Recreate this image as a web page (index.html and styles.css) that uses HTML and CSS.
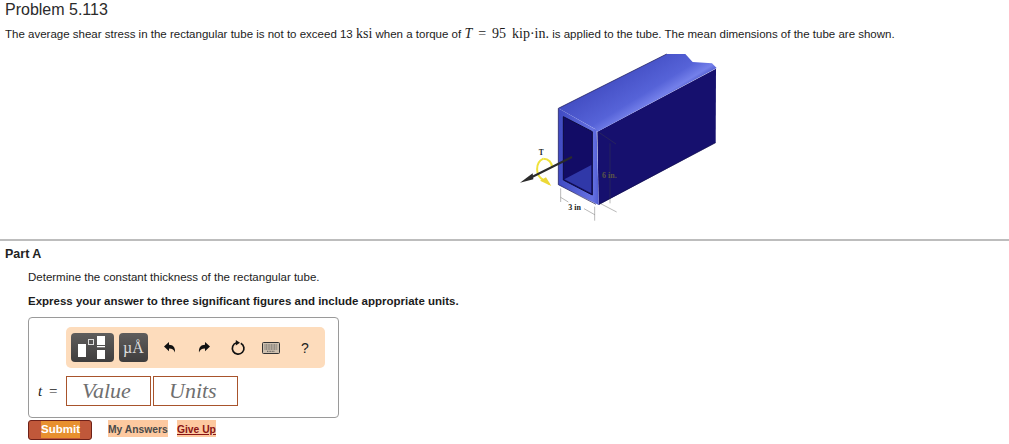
FILE: index.html
```html
<!DOCTYPE html>
<html lang="en">
<head>
<meta charset="utf-8">
<title>Problem 5.113</title>
<link rel="stylesheet" href="styles.css">
</head>
<body>
<h1 class="title">Problem 5.113</h1>
<p class="statement">The average shear stress in the rectangular tube is not to exceed 13 <span class="math">ksi</span> when a torque of <span class="math math-eq"><i>T</i> = 95 kip·in.</span> is applied to the tube. The mean dimensions of the tube are shown.</p>
<div class="figure">
<svg class="tube" viewBox="0 0 720 570" width="240" height="190" role="img" aria-label="Rectangular tube">
<defs>
<linearGradient id="top" gradientUnits="userSpaceOnUse" x1="340" y1="110" x2="420" y2="240"><stop offset="0" stop-color="#444fc4"/><stop offset="0.6" stop-color="#5663d8"/><stop offset="0.82" stop-color="#7480ea"/><stop offset="1" stop-color="#3f49bf"/></linearGradient>
<linearGradient id="front" x1="0" y1="0" x2="1" y2="0"><stop offset="0" stop-color="#3f4ac2"/><stop offset="0.85" stop-color="#6672e2"/><stop offset="1" stop-color="#4f5bd2"/></linearGradient>
</defs>
<path class="side" d="M292 275 L648 86 L647 308 L296 495 Z"/>
<path d="M175 205 L500 42 L556 42 L578 66 L636 70 L650 84 L292 275 L284 266 Z" fill="url(#top)"/>
<path d="M175 205 L290 270 L296 495 L175 434 Z" fill="url(#front)"/>
<path class="edge" d="M175 205 L500 42 M175 205 L175 434 L288 493 M296 493 L647 308"/>
<path class="hole" d="M190 230 L277 275 L277 465 L190 420 Z"/>
<path class="floor" d="M193 418 L274 375 L274 460 Z"/>
<path class="holeline" d="M190 230 L277 275 L277 465 L190 420 Z"/>
<path class="dim" d="M298 278 L348 312 M330 310 L330 490 M300 490 L350 516 M182 445 L182 486 M284 500 L284 542 M182 472 L205 486 M252 506 L284 524"/>
<path class="rot" d="M130 356 C104 368 106 408 130 420 C140 426 148 428 146 434"/>
<path class="rot" d="M130 356 C146 356 156 368 156 382"/>
<path class="rotHead" d="M120 422 L154 438 L138 412 Z"/>
<path class="shaft" d="M216 351 L90 414"/>
<path class="head" d="M60 428 L98 400 L100 418 Z"/>
<text class="lab labT" x="116" y="345">T</text>
<text class="lab lab6" x="306" y="413">6 in.</text>
<text class="lab" x="205" y="509">3 in</text>
</svg>
</div>
<hr class="rule">
<h2 class="part">Part A</h2>
<div class="body">
<p class="question">Determine the constant thickness of the rectangular tube.</p>
<p class="instruction">Express your answer to three significant figures and include appropriate units.</p>
<div class="answer">
<div class="toolbar">
<div class="tool tool-wide">
<svg viewBox="0 0 43 29" width="43" height="29"><rect class="w" x="7" y="11" width="8" height="13"/><rect class="o" x="17.500" y="6.500" width="5" height="5"/><rect class="w" x="26" y="3" width="8" height="9"/><rect class="w" x="26" y="13" width="8" height="1.300"/><rect class="w" x="26" y="17" width="8" height="9"/></svg>
</div>
<div class="tool tool-unit">µÅ</div>
<svg class="act a1" viewBox="0 0 14 14" width="14" height="14"><path d="M1 5.500 L6 1 V3.800 C10 3.800 12.500 6.500 12 11.500 C11 8.800 9.500 7.500 6 7.500 V10.200 Z"/></svg>
<svg class="act a2" viewBox="0 0 14 14" width="14" height="14"><path d="M13 5.500 L8 1 V3.800 C4 3.800 1.500 6.500 2 11.500 C3 8.800 4.500 7.500 8 7.500 V10.200 Z"/></svg>
<svg class="act a3" viewBox="0 0 16 16" width="16" height="16"><path class="ring" d="M6.500 2.800 A5.800 5.800 0 1 0 10.800 3.200"/><path d="M5.800 0 L10 2.800 L5.800 5.400 Z"/></svg>
<svg class="act a4" viewBox="0 0 18 12" width="18" height="12"><rect class="kb" x="0.500" y="0.500" width="17" height="11" rx="1"/><path class="keys" d="M2.500 3 H15.500 M2.500 5 H15.500 M2.500 7 H15.500 M5 9.300 H13"/></svg>
<span class="help">?</span>
</div>
<div class="entry">
<span class="var"><i>t</i> =</span>
<div class="field">Value</div>
<div class="field">Units</div>
</div>
</div>
<div class="actions">
<a class="submit"><span>Submit</span></a>
<a class="link link-grey">My Answers</a>
<a class="link link-red">Give Up</a>
</div>
</div>
</body>
</html>
```
FILE: styles.css
```css
* { box-sizing: border-box; }
html, body { margin: 0; padding: 0; }
body {
  width: 1009px;
  height: 444px;
  overflow: hidden;
  background: #fff;
  color: #1c1c1c;
  font-family: "Liberation Sans", Arial, sans-serif;
}
.title {
  margin: 0;
  padding: 1px 0 0 5px;
  height: 21px;
  font-size: 16px;
  line-height: 18px;
  font-weight: 400;
  color: #2b2b2b;
}
.statement {
  margin: 0;
  padding: 6px 0 0 5px;
  height: 20px;
  font-size: 11.500px;
  line-height: 14px;
  white-space: nowrap;
}
.math { font-family: "Liberation Serif", "DejaVu Serif", serif; font-size: 14px; }
.math-eq { word-spacing: 2.500px; }
.figure { height: 190px; padding-left: 500px; margin-top: -1px; }
.tube { display: block; }
.side { fill: #16106e; }
.edge { fill: none; stroke: #15124f; stroke-width: 2; }
.hole { fill: #120c66; }
.floor { fill: #3038a8; }
.holeline { fill: none; stroke: #0d0b3d; stroke-width: 3; }
.dim { fill: none; stroke: #444; stroke-width: 1.500; opacity: 0.75; }
.rot { fill: none; stroke: #efe23c; stroke-width: 6; }
.rotHead { fill: #ecd836; }
.shaft { stroke: #2b2b2b; stroke-width: 6; }
.head { fill: #2b2b2b; }
.lab { font-family: "Liberation Serif", serif; font-size: 24px; font-weight: 700; fill: #222; }
.lab6 { fill: #5b5648; }
.labT { font-size: 22px; }
.rule { margin: 9px 0 0; border: 0; height: 2px; background: #bdbdbd; }
.part {
  margin: 6px 0 0;
  padding-left: 5px;
  font-size: 12.500px;
  line-height: 14px;
  font-weight: 700;
  color: #222;
}
.body { padding-left: 28px; }
.question { margin: 9px 0 0; font-size: 11.500px; line-height: 14px; }
.instruction { margin: 10px 0 0; font-size: 11.500px; line-height: 14px; font-weight: 700; }
.answer {
  width: 311px;
  height: 101px;
  margin-top: 9px;
  padding: 9px 0 0 37px;
  border: 1px solid #9a9a9a;
  border-radius: 4px;
}
.toolbar {
  width: 259px;
  height: 41px;
  padding-left: 5px;
  display: flex;
  align-items: center;
  background: #fddcbc;
  border-radius: 5px;
}
.tool {
  height: 29px;
  border-radius: 4px;
  background: linear-gradient(#5f5d5c, #3f3d3d);
  color: #ddd;
  display: flex;
  align-items: center;
  justify-content: center;
}
.tool-wide { width: 43px; }
.tool-unit { width: 29px; margin-left: 5px; font-family: "Liberation Serif", serif; font-size: 16px; }
.w { fill: #fff; }
.o { fill: none; stroke: #ddd; stroke-width: 1; }
.act { display: block; fill: #111; }
.a1 { margin-left: 15px; }
.a2 { margin-left: 20px; }
.a3 { margin-left: 19px; }
.a4 { margin-left: 16px; }
.ring { fill: none; stroke: #111; stroke-width: 1.700; }
.kb { fill: #cdbfae; stroke: #333; stroke-width: 1; }
.keys { fill: none; stroke: #555; stroke-width: 1; stroke-dasharray: 1 0.600; }
.help { margin-left: 21px; font-size: 14px; color: #222; }
.entry { display: flex; align-items: center; margin: 8px 0 0 -28px; height: 30px; }
.var { width: 28px; font-family: "Liberation Serif", serif; font-size: 15px; word-spacing: 3px; color: #222; }
.field {
  width: 85px;
  height: 30px;
  margin-right: 2px;
  padding-left: 15px;
  border: 1px solid #a8542c;
  font-family: "Liberation Serif", serif;
  font-style: italic;
  font-size: 22px;
  line-height: 28px;
  color: #6f6f6f;
}
.actions { display: flex; align-items: flex-start; margin-top: 2px; font-size: 10.300px; font-weight: 700; }
.submit {
  width: 64px;
  height: 20px;
  padding-left: 12px;
  background: #c0583a;
  border: 1px solid #6e2118;
  border-radius: 3px;
  color: #fff;
  font-size: 11.500px;
  line-height: 17px;
}
.submit span { display: block; width: 39px; height: 17px; text-align: center; background: #e8902f; }
.link { height: 17px; line-height: 20px; background: #fdc9a0; }
.link-grey { margin-left: 16px; width: 60px; color: #4a4a4a; white-space: nowrap; }
.link-red { margin-left: 9px; color: #8a1414; text-decoration: underline; white-space: nowrap; }
```
